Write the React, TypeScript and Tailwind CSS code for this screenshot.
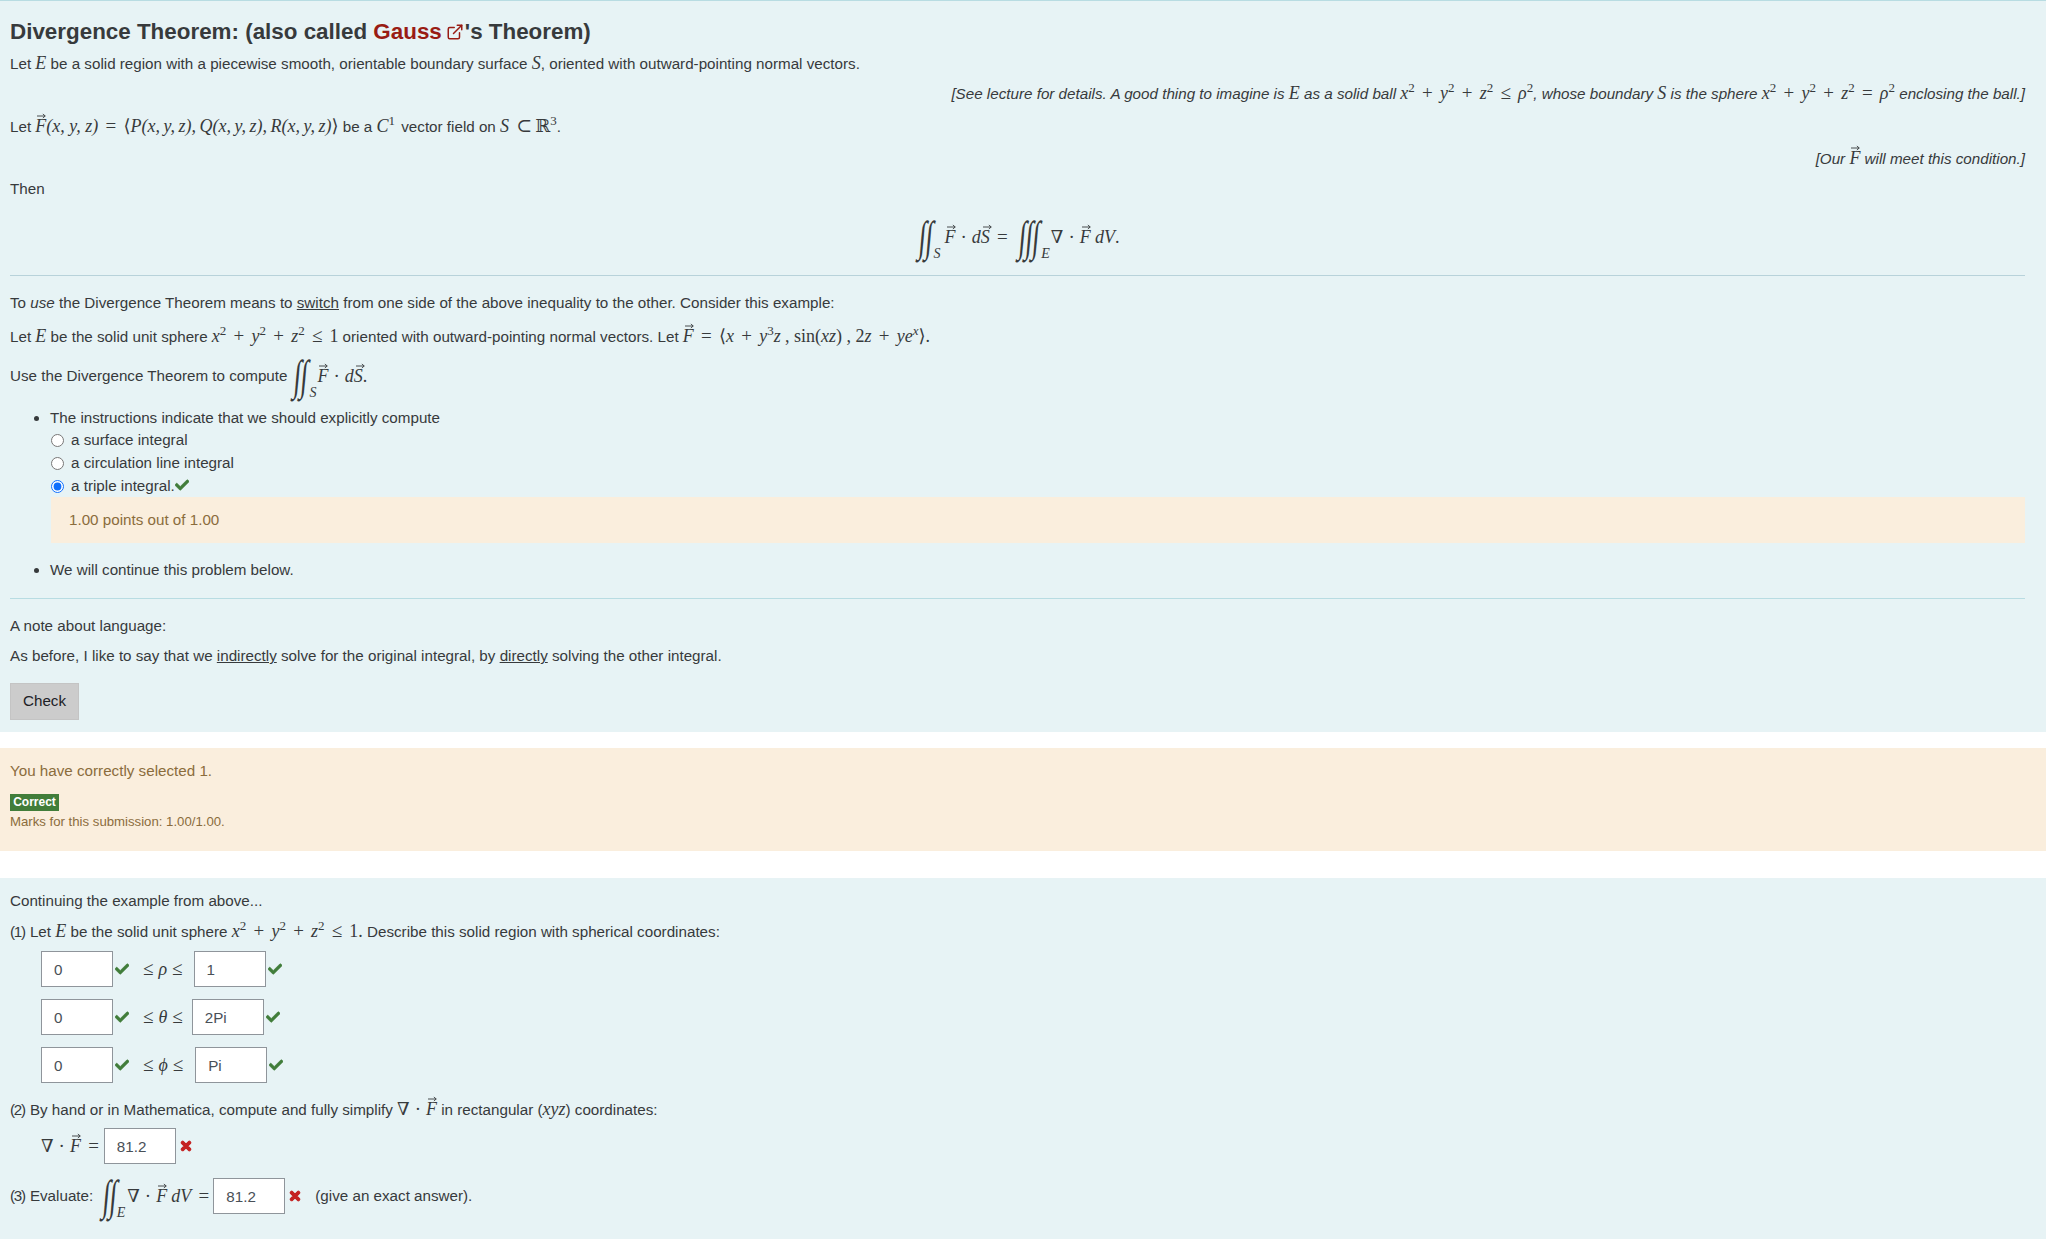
import React from 'react';
import { FaCheck, FaTimes } from 'react-icons/fa';
import { ExternalLink } from 'lucide-react';

const Up: React.FC<{ children: React.ReactNode }> = ({ children }) => (
  <span className="font-['Liberation_Serif','DejaVu_Serif',serif] text-[18px] not-italic">{children}</span>
);

const I: React.FC<{ children: React.ReactNode }> = ({ children }) => (
  <span className="font-['Liberation_Serif','DejaVu_Serif',serif] text-[18px] italic">{children}</span>
);

// binary operator / relation with MathJax-like spacing
const Op: React.FC<{ children: React.ReactNode }> = ({ children }) => (
  <span className="mx-[3px] font-['Liberation_Serif','DejaVu_Serif',serif] text-[19px] not-italic">{children}</span>
);

const Sup: React.FC<{ children: React.ReactNode }> = ({ children }) => (
  <span className="relative -top-[7px] font-['Liberation_Serif',serif] text-[13px] not-italic leading-none">{children}</span>
);

const Vec: React.FC<{ children: React.ReactNode }> = ({ children }) => (
  <span className="relative inline-block leading-none">
    <I>{children}</I>
    <svg viewBox="0 0 10 6" className="absolute -top-[4px] left-[2px] w-[9px] h-[6px]" fill="none" stroke="currentColor">
      <path d="M0 3h9M6.5 .8 9.2 3 6.5 5.2" strokeWidth="1" />
    </svg>
  </span>
);

const Sq: React.FC<{ v: string; p?: string }> = ({ v, p = '2' }) => (
  <>
    <I>{v}</I>
    <Sup>{p}</Sup>
  </>
);

const Integral: React.FC<{ n?: number; sub: string }> = ({ n = 2, sub }) => (
  <span className={`relative inline-block h-[42px] align-middle ${n === 3 ? 'w-[32px]' : 'w-[25px]'}`}>
    <span className="absolute left-[3px] top-0 origin-left scale-x-[0.62] -skew-x-[8deg] font-['Liberation_Serif',serif] text-[43px] leading-[42px] tracking-[-1px]">
      {n === 3 ? '∫∫∫' : '∫∫'}
    </span>
    <span className={`absolute -bottom-[3px] font-['Liberation_Serif',serif] text-[14px] italic leading-none ${n === 3 ? '-right-[2px]' : 'right-0'}`}>
      {sub}
    </span>
  </span>
);

const Dot = () => <span className="mx-[5px] font-['Liberation_Serif',serif] text-[19px] not-italic">·</span>;

const Check = ({ className = '' }: { className?: string }) => (
  <FaCheck strokeWidth={24} className={`inline-block text-[#417d3a] w-[14px] h-[14px] ${className}`} />
);

const Cross = ({ className = '' }: { className?: string }) => (
  <FaTimes strokeWidth={40} className={`inline-block text-[#c42020] w-[12px] h-[14px] ${className}`} />
);

const Answer: React.FC<{ value: string; className?: string }> = ({ value, className = '' }) => (
  <input
    readOnly
    value={value}
    className={`w-[72px] h-[36px] bg-white border border-[#8f959b] pl-[12px] text-[15.2px] text-[#495057] outline-none ${className}`}
  />
);

const Line: React.FC<{ className?: string; children: React.ReactNode }> = ({ className = '', children }) => (
  <p className={`h-6 leading-6 whitespace-nowrap ${className}`}>{children}</p>
);

const Num: React.FC<{ children: React.ReactNode }> = ({ children }) => (
  <span className="tracking-[-1.3px] mr-[1px]">{children}</span>
);

const Radio: React.FC<{ checked?: boolean; className?: string; children: React.ReactNode }> = ({
  checked,
  className = 'h-[23px]',
  children,
}) => (
  <label className={`flex items-center ${className}`}>
    <input type="radio" name="q" defaultChecked={checked} className="w-[13px] h-[13px] m-0 ml-[1px] accent-[#0d6efd]" />
    <span className="ml-[7px]">{children}</span>
  </label>
);

const SphericalRow: React.FC<{ symbol: string; upper: string; gapClass: string; className?: string }> = ({
  symbol,
  upper,
  gapClass,
  className = '',
}) => (
  <div className={`flex items-center h-[36px] ml-[31px] ${className}`}>
    <Answer value="0" />
    <Check className="ml-[2px]" />
    <span className="ml-[11px] whitespace-nowrap">
      <Op>≤</Op>
      <span className="mx-[2px]"><I>{symbol}</I></span>
      <Op>≤</Op>
    </span>
    <Answer value={upper} className={gapClass} />
    <Check className="ml-[2px]" />
  </div>
);

export default function App() {
  return (
    <div className="min-h-[1239px] bg-white font-['Liberation_Sans',sans-serif] text-[15.2px] text-[#373a3c]">
      <section className="h-[732px] bg-[#e7f3f5] border-t border-[#b8dce2] pl-[10px] pr-[21px]">
        <h3 className="pt-[14px] h-[48px] leading-[34px] text-[22.4px] font-bold whitespace-nowrap">
          Divergence Theorem: (also called <a className="text-[#991c14]">Gauss</a>
          <ExternalLink className="inline-block w-[18px] h-[18px] text-[#991c14] ml-[4px] -mt-[2px] mr-[1px]" />
          's Theorem)
        </h3>
        <Line className="mt-[2px]">
          Let <I>E</I> be a solid region with a piecewise smooth, orientable boundary surface <I>S</I>, oriented with outward-pointing normal vectors.
        </Line>
        <Line className="mt-[6px] text-right italic">
          [See lecture for details. A good thing to imagine is <I>E</I> as a solid ball <Sq v="x" /> <Op>+</Op> <Sq v="y" /> <Op>+</Op> <Sq v="z" /> <Op>≤</Op> <Sq v="ρ" />, whose boundary <I>S</I> is the sphere <Sq v="x" /> <Op>+</Op> <Sq v="y" /> <Op>+</Op> <Sq v="z" /> <Op>=</Op> <Sq v="ρ" /> enclosing the ball.]
        </Line>
        <Line className="mt-[9px]">
          Let <Vec>F</Vec><I>(x, y, z)</I> <Op>=</Op> <span className="[word-spacing:-1px]"><Up>⟨</Up><I>P(x, y, z), Q(x, y, z), R(x, y, z)</I><Up>⟩</Up></span> be a <I>C</I><Sup>1</Sup> <span className="ml-[2px]">vector</span> field on <I>S</I> <Op>⊂</Op><Up>ℝ</Up><Sup>3</Sup>.
        </Line>
        <Line className="mt-[9px] text-right italic">
          [Our <Vec>F</Vec> will meet this condition.]
        </Line>
        <Line className="mt-[6px]">Then</Line>
        <div className="mt-[12px] h-[48px] flex items-center justify-center whitespace-nowrap">
          <Integral sub="S" />
          <span className="ml-[4px]">
            <Vec>F</Vec><Dot /><I>d</I><Vec>S</Vec> <Op>=</Op>
          </span>
          <span className="ml-[5px]"><Integral n={3} sub="E" /></span>
          <span className="ml-[3px]">
            <Up>∇</Up><Dot /><Vec>F</Vec> <I>dV</I><Up>.</Up>
          </span>
        </div>
        <hr className="mt-[14px] border-[#b8d2da]" />
        <Line className="mt-[15px]">
          To <em>use</em> the Divergence Theorem means to <u>switch</u> from one side of the above inequality to the other. Consider this example:
        </Line>
        <Line className="mt-[9px]">
          Let <I>E</I> be the solid unit sphere <Sq v="x" /> <Op>+</Op> <Sq v="y" /> <Op>+</Op> <Sq v="z" /> <Op>≤</Op><span className="ml-[4px]"><Up>1</Up></span> oriented with outward-pointing normal vectors. Let <Vec>F</Vec> <Op>=</Op> <Up>⟨</Up><I>x</I> <Op>+</Op> <I>y</I><Sup>3</Sup><I>z</I> <Up>, sin(</Up><I>xz</I><Up>) , 2</Up><I>z</I> <Op>+</Op> <I>ye</I><Sup><em>x</em></Sup><Up>⟩.</Up>
        </Line>
        <div className="mt-[8px] h-[40px] flex items-center whitespace-nowrap">
          <span>Use the Divergence Theorem to compute</span>
          <span className="ml-[4px]"><Integral sub="S" /></span>
          <span className="ml-[1px]">
            <Vec>F</Vec><Dot /><I>d</I><Vec>S</Vec><Up>.</Up>
          </span>
        </div>
        <ul className="mt-[10px] list-disc pl-[40px]">
          <li className="h-[23px] leading-6">The instructions indicate that we should explicitly compute</li>
        </ul>
        <div className="pl-[40px]">
          <Radio>a surface integral</Radio>
          <Radio>a circulation line integral</Radio>
          <Radio checked className="h-[22px]">
            a triple integral.<Check className="-mt-[3px]" />
          </Radio>
          <div className="ml-[1px] h-[46px] bg-[#faeedd] text-[#8a6c3c] pl-[18px] flex items-center">1.00 points out of 1.00</div>
        </div>
        <ul className="mt-[15px] list-disc pl-[40px]">
          <li className="h-6 leading-6">We will continue this problem below.</li>
        </ul>
        <hr className="mt-[16px] border-[#b8dce2]" />
        <Line className="mt-[15px]">A note about language:</Line>
        <Line className="mt-[6px]">
          As before, I like to say that we <u>indirectly</u> solve for the original integral, by <u>directly</u> solving the other integral.
        </Line>
        <button className="mt-[15px] block w-[69px] h-[37px] bg-[#cccccc] border border-[#c4c4c4] text-[#1d2125]">Check</button>
      </section>

      <section className="mt-[16px] h-[103px] bg-[#faeedd] pl-[10px] pt-[11px] text-[#8a6c3c]">
        <p className="h-6 leading-6">You have correctly selected 1.</p>
        <span className="mt-[11px] block w-[49px] h-[17px] bg-[#417d3a] text-center text-[12px] leading-[17px] font-bold text-white">Correct</span>
        <p className="mt-[1px] text-[13.2px] leading-[20px]">Marks for this submission: 1.00/1.00.</p>
      </section>

      <section className="mt-[27px] h-[361px] bg-[#e7f3f5] pl-[10px] pt-[11px]">
        <Line>Continuing the example from above...</Line>
        <Line className="mt-[6px]">
          <Num>(1)</Num> Let <I>E</I> be the solid unit sphere <Sq v="x" /> <Op>+</Op> <Sq v="y" /> <Op>+</Op> <Sq v="z" /> <Op>≤</Op><span className="ml-[4px]"><Up>1.</Up></span> Describe this solid region with spherical coordinates:
        </Line>
        <SphericalRow symbol="ρ" upper="1" gapClass="ml-[8px]" className="mt-[8px]" />
        <SphericalRow symbol="θ" upper="2Pi" gapClass="ml-[6px]" className="mt-[12px]" />
        <SphericalRow symbol="ϕ" upper="Pi" gapClass="ml-[9px]" className="mt-[12px]" />
        <Line className="mt-[14px]">
          <Num>(2)</Num> By hand or in Mathematica, compute and fully simplify <Up>∇</Up><Dot /><Vec>F</Vec> in rectangular (<I>xyz</I>) coordinates:
        </Line>
        <div className="mt-[7px] ml-[31px] h-[36px] flex items-center whitespace-nowrap">
          <span>
            <Up>∇</Up><Dot /><Vec>F</Vec> <Op>=</Op>
          </span>
          <Answer value="81.2" className="ml-[2px]" />
          <Cross className="ml-[4px]" />
        </div>
        <div className="mt-[14px] h-[36px] flex items-center whitespace-nowrap">
          <span><Num>(3)</Num> Evaluate:</span>
          <span className="ml-[7px]"><Integral sub="E" /></span>
          <span className="ml-[2px]">
            <Up>∇</Up><Dot /><Vec>F</Vec> <I>dV</I> <Op>=</Op>
          </span>
          <Answer value="81.2" className="ml-[1px]" />
          <Cross className="ml-[4px]" />
          <span className="ml-[14px]">(give an exact answer).</span>
        </div>
      </section>
    </div>
  );
}
